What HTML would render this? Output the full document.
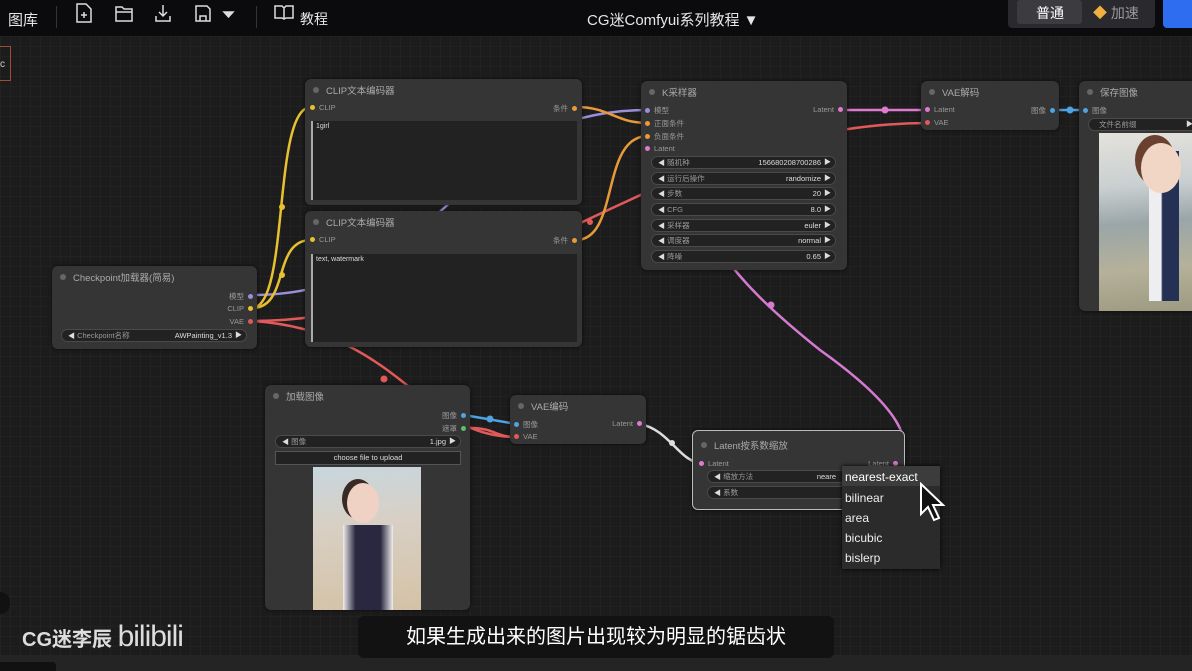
<!DOCTYPE html>
<html><head><meta charset="utf-8"><style>
*{margin:0;padding:0;box-sizing:border-box}
body{width:1192px;height:671px;overflow:hidden;position:relative;background:#1d1d1d;font-family:"Liberation Sans","Noto Sans CJK SC",sans-serif;color:#ccc}
.grid{position:absolute;left:0;top:36px;width:1192px;height:635px;background-color:#1c1c1c;background-image:linear-gradient(#222 1px,transparent 1px),linear-gradient(90deg,#222 1px,transparent 1px);background-size:10px 10px}
.top{position:absolute;left:0;top:0;width:1192px;height:36px;background:#0b0b0e;color:#e6e6e6;font-size:15px}
.top span{position:absolute;top:9px}
.node{position:absolute;background:#353535;border-radius:6px;box-shadow:0 0 4px #000a}
.tt{position:absolute;left:8px;top:4px;font-size:9.5px;color:#aaa}
.tt:before{content:"";display:inline-block;width:6px;height:6px;border-radius:50%;background:#666;margin-right:7px;vertical-align:1px}
.in,.out{position:absolute;font-size:7.5px;color:#999}
.in:before{content:"";display:inline-block;width:5px;height:5px;border-radius:50%;background:var(--c);margin-right:4px;vertical-align:0}
.out:after{content:"";display:inline-block;width:5px;height:5px;border-radius:50%;background:var(--c);margin-left:4px;vertical-align:0}
.w{position:absolute;height:13px;background:#222;border:1px solid #4a4a4a;border-radius:7px;font-size:7.5px;color:#999;line-height:11px;padding:0 6px}
.w b{font-weight:normal;color:#ddd;position:absolute;right:14px}
.w:after{content:"▶";position:absolute;right:4px;color:#ddd;font-size:7px}
.w i{font-style:normal;color:#ddd;font-size:7px}
.ta{position:absolute;background:#222;border-left:2px solid #aaa;font-size:7px;color:#ddd;padding:2px 3px}
</style></head><body>
<div class="grid"></div>
<svg style="position:absolute;left:0;top:0" width="1192" height="671" fill="none" stroke-width="2.5">
<path d="M252 295 C450 295 450 110 648 110" stroke="#9a8fd8"/>
<path d="M252 308 C290 308 272 107 311 107" stroke="#e8c130"/>
<path d="M252 308 C290 308 272 240 311 240" stroke="#e8c130"/>
<path d="M252 321 C500 321 660 123 928 123" stroke="#e05a5a"/>
<path d="M252 321 C400 330 420 437 516 437" stroke="#e05a5a"/>
<path d="M470 428 C495 428 495 437 516 437" stroke="#e05a5a"/>
<path d="M576 107 C610 107 615 123 648 123" stroke="#e89a3a"/>
<path d="M576 240 C620 240 600 136 648 136" stroke="#e89a3a"/>
<path d="M841 110 L928 110" stroke="#e07ad0"/>
<path d="M895 463 C920 440 890 400 820 350 C770 310 740 280 720 250 C660 170 660 149 648 149" stroke="#d47ad0"/>
<path d="M464 415 L516 424" stroke="#4fa3e0"/>
<path d="M1053 110 L1086 110" stroke="#4fa3e0"/>
<path d="M640 424 C670 430 680 463 702 463" stroke="#ddd"/>
<g stroke="none"><circle cx="282" cy="207" r="3" fill="#e8c130"/><circle cx="282" cy="275" r="3" fill="#e8c130"/><circle cx="885" cy="110" r="3.5" fill="#e07ad0"/><circle cx="771" cy="305" r="3.5" fill="#d47ad0"/><circle cx="384" cy="379" r="3.5" fill="#e05a5a"/><circle cx="490" cy="419" r="3.5" fill="#4fa3e0"/><circle cx="1070" cy="110" r="3.5" fill="#4fa3e0"/><circle cx="672" cy="443" r="3" fill="#ddd"/><circle cx="590" cy="222" r="3" fill="#e05a5a"/></g>
</svg>
<div style="position:absolute;left:-5px;top:46px;width:16px;height:35px;border:1px solid #a04a3a;color:#ccc;font-size:10px;padding:12px 0 0 4px">c</div>

<div class="node" style="left:305px;top:79px;width:277px;height:126px"><div class="tt">CLIP文本编码器</div>
<div class="in" style="--c:#e8c130;left:5px;top:24px">CLIP</div><div class="out" style="--c:#e89a3a;right:5px;top:24px">条件</div>
<div class="ta" style="left:6px;top:42px;width:266px;height:79px">1girl</div></div>
<div class="node" style="left:305px;top:211px;width:277px;height:136px"><div class="tt">CLIP文本编码器</div>
<div class="in" style="--c:#e8c130;left:5px;top:24px">CLIP</div><div class="out" style="--c:#e89a3a;right:5px;top:24px">条件</div>
<div class="ta" style="left:6px;top:43px;width:266px;height:88px">text, watermark</div></div>

<div class="node" style="left:52px;top:266px;width:205px;height:83px"><div class="tt">Checkpoint加载器(简易)</div>
<div class="out" style="--c:#9a8fd8;right:4px;top:25px">模型</div><div class="out" style="--c:#e8c130;right:4px;top:38px">CLIP</div><div class="out" style="--c:#e05a5a;right:4px;top:51px">VAE</div>
<div class="w" style="left:9px;top:63px;width:186px"><i>◀</i> Checkpoint名称<b>AWPainting_v1.3</b></div></div>

<div class="node" style="left:641px;top:81px;width:206px;height:189px"><div class="tt">K采样器</div>
<div class="in" style="--c:#9a8fd8;left:4px;top:24px">模型</div><div class="in" style="--c:#e89a3a;left:4px;top:37px">正面条件</div><div class="in" style="--c:#e89a3a;left:4px;top:50px">负面条件</div><div class="in" style="--c:#e07ad0;left:4px;top:63px">Latent</div>
<div class="out" style="--c:#e07ad0;right:4px;top:24px">Latent</div>
<div class="w" style="left:10px;top:75px;width:185px"><i>◀</i> 随机种<b>156680208700286</b></div>
<div class="w" style="left:10px;top:91px;width:185px"><i>◀</i> 运行后操作<b>randomize</b></div>
<div class="w" style="left:10px;top:106px;width:185px"><i>◀</i> 步数<b>20</b></div>
<div class="w" style="left:10px;top:122px;width:185px"><i>◀</i> CFG<b>8.0</b></div>
<div class="w" style="left:10px;top:138px;width:185px"><i>◀</i> 采样器<b>euler</b></div>
<div class="w" style="left:10px;top:153px;width:185px"><i>◀</i> 调度器<b>normal</b></div>
<div class="w" style="left:10px;top:169px;width:185px"><i>◀</i> 降噪<b>0.65</b></div></div>

<div class="node" style="left:921px;top:81px;width:138px;height:49px"><div class="tt">VAE解码</div>
<div class="in" style="--c:#e07ad0;left:4px;top:24px">Latent</div><div class="in" style="--c:#e05a5a;left:4px;top:37px">VAE</div>
<div class="out" style="--c:#4fa3e0;right:4px;top:24px">图像</div></div>

<div class="node" style="left:1079px;top:81px;width:120px;height:230px"><div class="tt">保存图像</div>
<div class="in" style="--c:#4fa3e0;left:4px;top:24px">图像</div>
<div class="w" style="left:9px;top:37px;width:110px"><span style="margin-left:4px">文件名前缀</span></div>
<div style="position:absolute;left:20px;top:52px;width:100px;height:178px;background:linear-gradient(175deg,#e4e2dc 0%,#c9cfd0 30%,#9aa6a8 50%,#b5b19a 75%,#9c9a80 100%)"></div>
<div style="position:absolute;left:70px;top:70px;width:30px;height:150px;background:linear-gradient(90deg,#eeeef0 0%,#eeeef0 40%,#253055 45%,#253055 100%)"></div>
<div style="position:absolute;left:62px;top:62px;width:40px;height:50px;border-radius:50%;background:#f1d6c6;box-shadow:-6px -8px 0 #6a4030"></div></div>

<div class="node" style="left:265px;top:385px;width:205px;height:225px"><div class="tt">加载图像</div>
<div class="out" style="--c:#4fa3e0;right:4px;top:25px">图像</div><div class="out" style="--c:#5cbf6a;right:4px;top:38px">遮罩</div>
<div class="w" style="left:10px;top:50px;width:186px"><i>◀</i> 图像<b>1.jpg</b></div>
<div style="position:absolute;left:10px;top:66px;width:186px;height:14px;background:#222;border:1px solid #555;font-size:7.5px;color:#ddd;text-align:center;line-height:12px">choose file to upload</div>
<div style="position:absolute;left:48px;top:82px;width:108px;height:143px;background:linear-gradient(175deg,#c8d6de 0%,#d8d0c4 40%,#d4c2a6 100%)"></div>
<div style="position:absolute;left:78px;top:140px;width:50px;height:85px;background:linear-gradient(90deg,#f0eeee 0%,#2a2840 25%,#2a2840 75%,#f0eeee 100%)"></div>
<div style="position:absolute;left:82px;top:98px;width:32px;height:40px;border-radius:50%;background:#f0d2c4;box-shadow:-5px -4px 0 #3a2a24"></div></div>

<div class="node" style="left:510px;top:395px;width:136px;height:49px"><div class="tt">VAE编码</div>
<div class="in" style="--c:#4fa3e0;left:4px;top:24px">图像</div><div class="in" style="--c:#e05a5a;left:4px;top:37px">VAE</div>
<div class="out" style="--c:#e07ad0;right:4px;top:24px">Latent</div></div>

<div class="node" style="left:692px;top:430px;width:213px;height:80px;border:1px solid #bbb"><div class="tt" style="top:7px">Latent按系数缩放</div>
<div class="in" style="--c:#e07ad0;left:6px;top:28px">Latent</div><div class="out" style="--c:#e07ad0;right:6px;top:28px">Latent</div>
<div class="w" style="left:14px;top:39px;width:190px"><i>◀</i> 缩放方法<b style="right:60px">neare</b></div>
<div class="w" style="left:14px;top:55px;width:190px"><i>◀</i> 系数</div></div>

<div style="position:absolute;left:842px;top:466px;width:98px;height:103px;background:#2b2b2b;box-shadow:0 0 4px #000;font-size:12px;color:#eee">
<div style="background:#3c3c3c;height:20px;padding:4px 3px 0;color:#fff">nearest-exact</div>
<div style="padding:5px 3px 0;height:20px">bilinear</div><div style="padding:5px 3px 0;height:20px">area</div><div style="padding:5px 3px 0;height:20px">bicubic</div><div style="padding:5px 3px 0;height:20px">bislerp</div></div>
<svg style="position:absolute;left:918px;top:482px" width="30" height="42"><path d="M3 2 L3 32 L10 25 L16 38 L21 36 L15 23 L25 23 Z" fill="#111" stroke="#fff" stroke-width="2"/></svg>

<div class="top">
<span style="left:8px">图库</span>
<div style="position:absolute;left:56px;top:6px;width:1px;height:22px;background:#333"></div>
<svg style="position:absolute;left:74px;top:2px" width="170" height="22" fill="none" stroke="#ddd" stroke-width="1.5">
<path d="M3 2 h9 l5 5 v13 h-14z M10 10 v6 M7 13 h6"/>
<path d="M42 5 h6 l2 2 h8 v12 h-16z M42 10 h16"/>
<path d="M89 3 v11 M85 10 l4 4 4-4 M82 14 v5 h14 v-5"/>
<path d="M122 4 h11 l3 3 v12 h-14z M126 14 h6 v5 h-6z"/>
<path d="M150 10 h9 l-4.5 5z" fill="#ddd"/></svg>
<div style="position:absolute;left:256px;top:6px;width:1px;height:22px;background:#333"></div>
<svg style="position:absolute;left:274px;top:3px" width="20" height="18" fill="none" stroke="#ddd" stroke-width="1.5"><path d="M1 3 h7 l2 2 2-2 h7 v12 h-7 l-2 1 -2-1 h-7z M10 5 v11"/></svg>
<span style="left:300px;font-size:14px">教程</span>
<span style="left:587px;font-size:15px">CG迷Comfyui系列教程 ▼</span>
<div style="position:absolute;left:1008px;top:0;width:147px;height:28px;background:#2a2a2e;border-radius:0 0 4px 4px"></div>
<div style="position:absolute;left:1017px;top:0;width:65px;height:24px;background:#3b3b40;border-radius:3px"></div>
<span style="left:1036px;top:3px;font-size:14px;color:#fff">普通</span>
<span style="left:1093px;top:3px;font-size:14px;color:#999"><span style="position:static;color:#f0b040">◆</span> 加速</span>
<div style="position:absolute;left:1163px;top:0;width:40px;height:28px;background:#2e6cf0;border-radius:0 0 4px 4px"></div>
</div>

<div style="position:absolute;left:0;top:655px;width:1192px;height:16px;background:#242424"></div>
<div style="position:absolute;left:0;top:662px;width:56px;height:9px;background:#111;border-radius:0 4px 0 0"></div>
<div style="position:absolute;left:0;top:592px;width:10px;height:22px;border-radius:0 11px 11px 0;background:#111"></div>
<div style="position:absolute;left:22px;top:620px;font-size:20px;color:#ddd;font-weight:bold">CG迷李辰 <span style="font-family:'Liberation Sans';font-size:30px;font-weight:normal;letter-spacing:-1px">bilibili</span></div>
<div style="position:absolute;left:358px;top:616px;width:476px;height:42px;background:#121212;border-radius:6px;color:#fff;font-size:20px;text-align:center;line-height:42px">如果生成出来的图片出现较为明显的锯齿状</div>
</body></html>
